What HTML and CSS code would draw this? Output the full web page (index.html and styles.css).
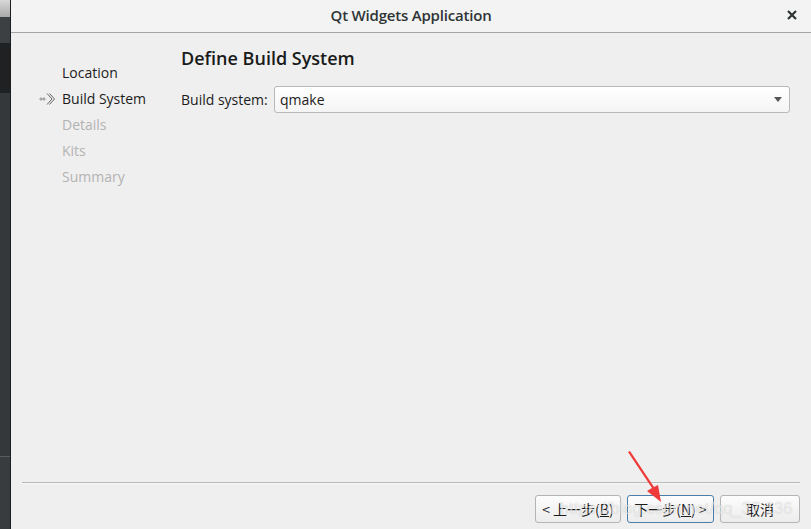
FILE: index.html
```html
<!DOCTYPE html>
<html>
<head>
<meta charset="utf-8">
<link rel="stylesheet" href="styles.css">
</head>
<body>
<div class="desk">
  <div class="desk-top"></div>
  <div class="desk-band"></div>
  <div class="desk-dark"></div>
  <div class="desk-mid"></div>
  <div class="desk-line"></div>
  <div class="desk-bottom"></div>
</div>
<div class="window">
  <div class="titlebar">
    <span class="title">Qt Widgets Application</span>
    <svg class="close" width="10" height="10" viewBox="0 0 10 10"><path d="M1 1 L9 9 M9 1 L1 9" stroke="#2e3436" stroke-width="2.2" stroke-linecap="butt"/></svg>
  </div>
  <div class="main">
    <ul class="steps">
      <li class="step done">Location</li>
      <li class="step current">
        <svg class="arrow" width="18" height="14" viewBox="0 0 18 14"><circle cx="2" cy="7" r="1.1" fill="none" stroke="#777" stroke-width="0.8"/><circle cx="5" cy="7" r="1.1" fill="none" stroke="#777" stroke-width="0.8"/><path d="M8 1.5 L13 7 L8 12.5 M10.5 1.5 L15.5 7 L10.5 12.5" fill="none" stroke="#666" stroke-width="1"/></svg>
        Build System</li>
      <li class="step todo">Details</li>
      <li class="step todo">Kits</li>
      <li class="step todo">Summary</li>
    </ul>
    <div class="content">
      <h1 class="heading">Define Build System</h1>
      <div class="row">
        <label class="label">Build system:</label>
        <div class="combo"><span>qmake</span>
          <svg class="drop" width="8" height="5" viewBox="0 0 8 5"><path d="M0 0 L8 0 L4 5 Z" fill="#555"/></svg>
        </div>
      </div>
    </div>
  </div>
  <div class="footer">
    <div class="sep"></div>
    <div class="buttons">
      <button class="btn back">&lt;&nbsp;上一步(<u>B</u>)</button>
      <button class="btn next">下一步(<u>N</u>) &gt;</button>
      <button class="btn cancel">取消</button>
    </div>
  </div>
</div>
<div class="watermark">https://blog.csdn.net/qq_37&nbsp;136</div>
<svg class="pointer" width="60" height="70" viewBox="0 0 60 70"><path d="M2 2 L26 38 L21 41 L35 52 L32 35 L28 37 L4 1 Z" fill="#ee3a3a"/></svg>
</body>
</html>
```
FILE: styles.css
```css
html, body {
  margin: 0;
  padding: 0;
}
body {
  width: 811px;
  height: 529px;
  overflow: hidden;
  display: flex;
  background: #efefef;
  font-family: "Open Sans", "Noto Sans", "Noto Sans CJK SC", sans-serif;
  position: relative;
}
.desk {
  width: 10px;
  border-right: 1px solid #1c1d1e;
  display: flex;
  flex-direction: column;
  background: #35383a;
}
.desk-top { height: 17px; background: linear-gradient(#d8d8d8, #a9a9a9); }
.desk-band { height: 26px; background: #3d4043; }
.desk-dark { height: 50px; background: #1f2123; }
.desk-mid { flex: 0 0 363px; background: #35383a; }
.desk-line { height: 1px; background: #5a5d60; }
.desk-bottom { flex: 1; background: #393c3e; }

.window {
  flex: 1;
  display: flex;
  flex-direction: column;
}
.titlebar {
  height: 32px;
  border-bottom: 1px solid #a4a4a0;
  background: #f3f3f3;
  display: flex;
  align-items: center;
  justify-content: center;
  position: relative;
}
.title {
  font-size: 15px;
  font-weight: 600;
  color: #2e3436;
  letter-spacing: -0.2px;
  margin-top: -2px;
}
.close {
  position: absolute;
  right: 14px;
  top: 10px;
}
.main {
  flex: 1;
  display: flex;
}
.steps {
  list-style: none;
  margin: 0;
  padding: 27px 0 0 51px;
  width: 119px;
}
.step {
  height: 26px;
  line-height: 26px;
  font-size: 14px;
  position: relative;
}
.done, .current { color: #1c1c1c; }
.todo { color: #b3b3b3; }
.arrow {
  position: absolute;
  left: -23px;
  top: 6px;
}
.content {
  flex: 1;
  padding: 13px 21px 0 0;
}
.heading {
  margin: 0;
  font-size: 18px;
  font-weight: 600;
  line-height: 24px;
  color: #1a1a1a;
}
.row {
  display: flex;
  align-items: center;
  margin-top: 16px;
}
.label {
  font-size: 14px;
  color: #1c1c1c;
  width: 93px;
}
.combo {
  flex: 1;
  height: 25px;
  border: 1px solid #b9b9b9;
  border-radius: 3px;
  background: linear-gradient(#ffffff, #f4f4f4);
  display: flex;
  align-items: center;
  justify-content: space-between;
  padding: 0 7px 0 5px;
  font-size: 14px;
  color: #1c1c1c;
}
.footer {
  height: 47px;
  display: flex;
  flex-direction: column;
  padding: 0 11px;
}
.sep {
  height: 1px;
  background: #b9b9b9;
  border-bottom: 1px solid #f6f6f6;
}
.buttons {
  display: flex;
  justify-content: flex-end;
  gap: 6px;
  margin-top: 11px;
}
.btn {
  height: 28px;
  box-sizing: border-box;
  border: 1px solid #b4b4b4;
  border-radius: 3px;
  background: linear-gradient(#fdfdfd, #ececec);
  font-family: "Noto Sans CJK SC", "Open Sans", sans-serif;
  font-size: 14px;
  color: #1c1c1c;
  padding: 0;
}
.btn u { text-decoration: underline; }
.back { width: 86px; }
.next { width: 87px; border-color: #4b7ea8; }
.cancel { width: 80px; }
.watermark {
  position: absolute;
  left: 560px;
  top: 500px;
  font-family: "Liberation Sans", sans-serif;
  font-size: 16px;
  color: rgba(255, 255, 255, 0.6);
  text-shadow: 0 0 1px rgba(150, 150, 150, 0.5);
  letter-spacing: 0.3px;
  white-space: nowrap;
}
.pointer {
  position: absolute;
  left: 626px;
  top: 450px;
}
```
